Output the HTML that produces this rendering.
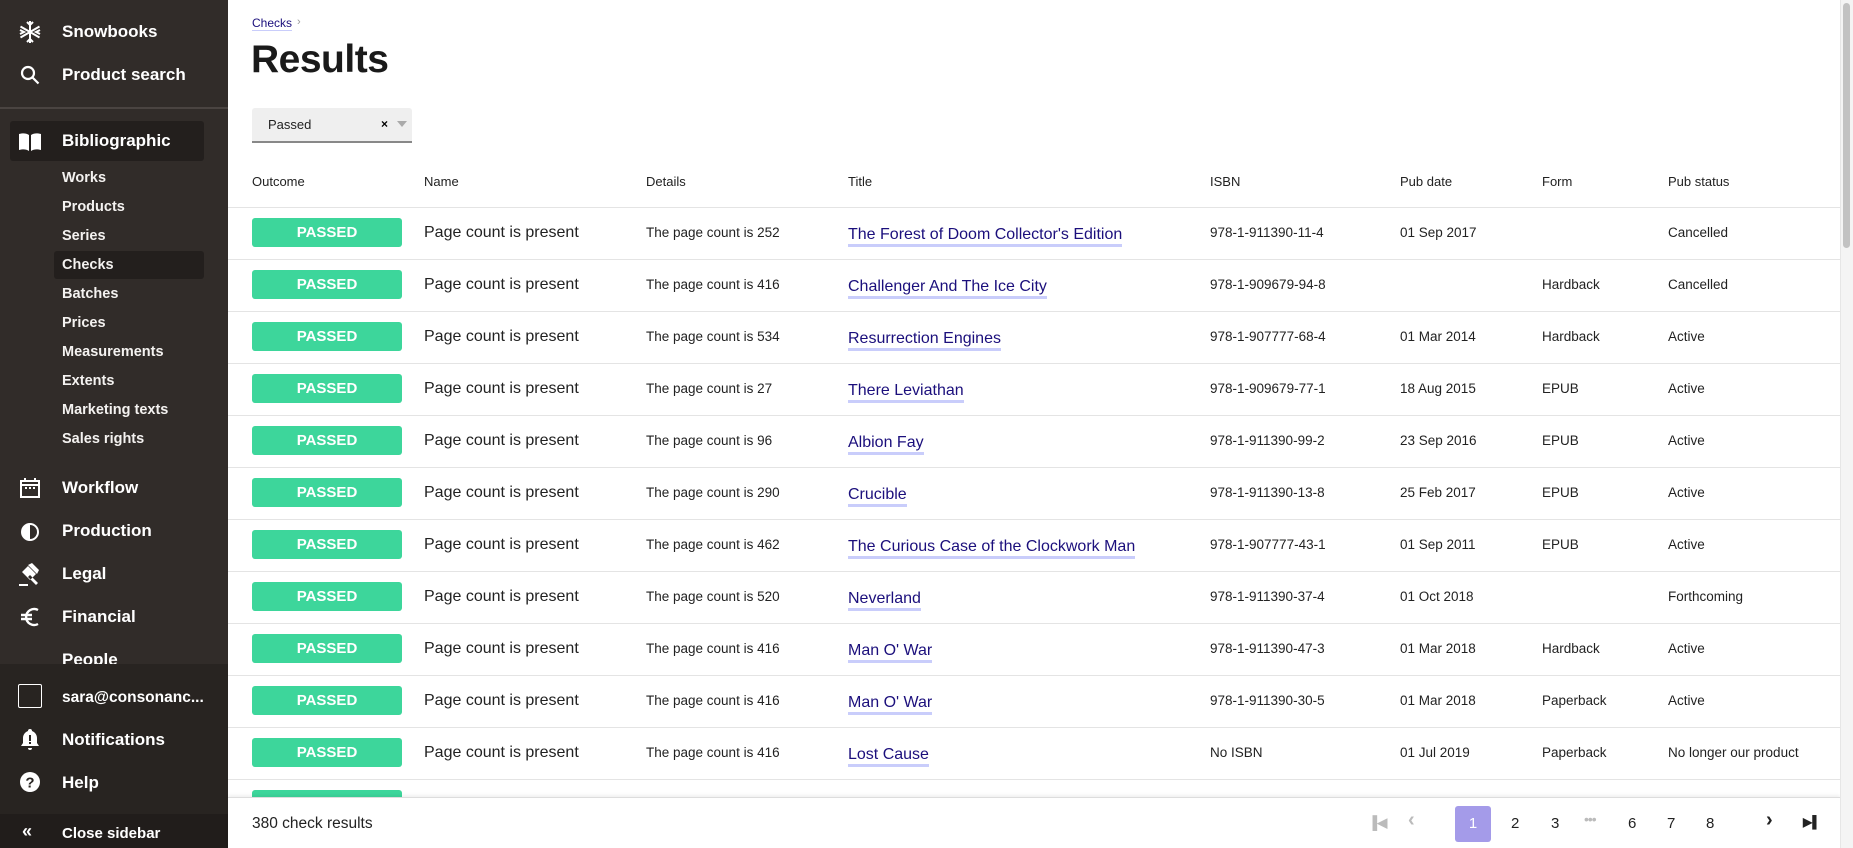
<!DOCTYPE html>
<html><head><meta charset="utf-8"><style>
*{box-sizing:border-box;margin:0;padding:0}
body{width:1853px;height:848px;overflow:hidden;font-family:"Liberation Sans",sans-serif;background:#fff;position:relative}
#sb{position:absolute;left:0;top:0;width:228px;height:848px;background:#312c29;color:#fff}
.it{position:absolute;left:62px;font-weight:bold;font-size:17px;line-height:20px}
.ic{position:absolute;left:18px;width:24px;height:24px}
.sub{position:absolute;left:62px;font-size:14.5px;line-height:18px;font-weight:bold;color:#f4f2f0}
#main{position:absolute;left:228px;top:0;width:1612px;height:848px}
.a{position:absolute}
.hd{position:absolute;top:174px;font-size:13px;color:#222}
.row{position:absolute;left:0;width:1612px;height:52px;border-top:1px solid #e4e4e4}
.badge{position:absolute;left:24px;top:10px;width:150px;height:29px;background:#3dd69b;border-radius:3px;color:#fff;font-weight:bold;font-size:15px;text-align:center;line-height:29px}
.c{position:absolute;top:17px;color:#222;white-space:nowrap}
.nm{left:196px;font-size:16px;top:16px}
.dt{left:418px;font-size:13.5px}
.tt{left:620px;font-size:16px;top:17px;color:#1b0f7c;border-bottom:3px solid #c9cdfb;line-height:19px}
.is{left:982px;font-size:13.5px}.pd{left:1172px;font-size:13.5px}.fm{left:1314px;font-size:13.5px}.ps{left:1440px;font-size:13.5px}
.pg{position:absolute;top:815px;font-size:15px;color:#222}
</style></head><body>
<div id="sb">
<svg class="ic" style="top:20px" viewBox="0 0 24 24" stroke="#fff" stroke-width="2" fill="none"><path d="M12 1v22M2.5 6.5l19 11M2.5 17.5l19-11M9 2l3 3 3-3M9 22l3-3 3 3M2 10l4 2-4 2M22 10l-4 2 4 2"/></svg>
<div class="it" style="top:22px">Snowbooks</div>
<svg class="ic" style="top:63px" viewBox="0 0 24 24" stroke="#fff" stroke-width="2.2" fill="none"><circle cx="10" cy="10" r="6"/><path d="M14.5 14.5l6 6"/></svg>
<div class="it" style="top:65px">Product search</div>
<div class="a" style="left:0;top:107px;width:228px;height:2px;background:#4a4441"></div>
<div class="a" style="left:10px;top:121px;width:194px;height:40px;background:#231f1d;border-radius:3px"></div>
<svg class="ic" style="top:130px" viewBox="0 0 24 24" fill="#fff"><path d="M1 4c4-1 7-1 10 1v16c-3-2-6-2-10-1zM13 5c3-2 6-2 10-1v16c-4-1-7-1-10 1z"/></svg>
<div class="it" style="top:131px">Bibliographic</div>
<div class="sub" style="top:169px">Works</div>
<div class="sub" style="top:198px">Products</div>
<div class="sub" style="top:227px">Series</div>
<div class="a" style="left:54px;top:251px;width:150px;height:28px;background:#231f1d;border-radius:3px"></div>
<div class="sub" style="top:256px">Checks</div>
<div class="sub" style="top:285px">Batches</div>
<div class="sub" style="top:314px">Prices</div>
<div class="sub" style="top:343px">Measurements</div>
<div class="sub" style="top:372px">Extents</div>
<div class="sub" style="top:401px">Marketing texts</div>
<div class="sub" style="top:430px">Sales rights</div>
<svg class="ic" style="top:476px" viewBox="0 0 24 24" fill="none" stroke="#fff" stroke-width="2"><rect x="3" y="5" width="18" height="16"/><path d="M3 9h18M7 2v4M17 2v4M7 12h2M11 12h2M15 12h2"/></svg>
<div class="it" style="top:478px">Workflow</div>
<svg class="ic" style="top:519px" viewBox="0 0 24 24"><circle cx="12" cy="13" r="8" fill="none" stroke="#fff" stroke-width="2"/><path d="M12 5v16a8 8 0 010-16z" fill="#fff"/></svg>
<div class="it" style="top:521px">Production</div>
<svg class="ic" style="top:562px" viewBox="0 0 24 24" fill="#fff"><path d="M10 3l4-2 7 7-2 4zM4 10l6-6 8 8-6 6zM10 15l8 8 2-2-8-8zM1 22h9v2H1z"/></svg>
<div class="it" style="top:564px">Legal</div>
<svg class="ic" style="top:605px" viewBox="0 0 24 24" fill="none" stroke="#fff" stroke-width="2.4"><path d="M20 5a8 8 0 100 14M3 10h11M3 14h11"/></svg>
<div class="it" style="top:607px">Financial</div>
<div class="it" style="top:650px">People</div>
<div class="a" style="left:0;top:664px;width:228px;height:150px;background:#282421"></div>
<div class="a" style="left:18px;top:684px;width:24px;height:24px;border:1.5px solid #fff;border-radius:2px"></div>
<div class="it" style="top:688px;font-size:15.5px">sara@consonanc...</div>
<svg class="ic" style="top:727px" viewBox="0 0 24 24" fill="#fff"><path d="M12 2a2 2 0 012 2c3 1 5 4 5 7v5l2 3H3l2-3v-5c0-3 2-6 5-7a2 2 0 012-2zM10 21h4a2 2 0 01-4 0z"/><rect x="11" y="8" width="2" height="6" fill="#282421"/><rect x="11" y="15" width="2" height="2" fill="#282421"/></svg>
<div class="it" style="top:730px">Notifications</div>
<svg class="ic" style="top:770px" viewBox="0 0 24 24"><circle cx="12" cy="12" r="10" fill="#fff"/><text x="12" y="17.5" text-anchor="middle" font-size="15" font-weight="bold" fill="#282421" font-family="Liberation Sans">?</text></svg>
<div class="it" style="top:773px">Help</div>
<div class="a" style="left:0;top:814px;width:228px;height:34px;background:#211d1b"></div>
<div class="it" style="top:821px;left:22px;font-size:18px">«</div>
<div class="it" style="top:824px;font-size:15px">Close sidebar</div>
</div>
<div id="main">
<div class="a" style="left:24px;top:16px;font-size:12px;color:#1b0f7c;border-bottom:1px solid #c9cdfb">Checks</div><div class="a" style="left:69px;top:16px;font-size:11px;color:#999">›</div>
<div class="a" style="left:23px;top:38px;font-size:39px;font-weight:bold;color:#1a1a1a;letter-spacing:-0.5px">Results</div>
<div class="a" style="left:24px;top:108px;width:160px;height:35px;background:#efefef;border-bottom:2px solid #888;border-radius:3px 3px 0 0"></div>
<div class="a" style="left:40px;top:117px;font-size:13px;color:#222">Passed</div>
<div class="a" style="left:153px;top:117px;font-size:12px;font-weight:bold">×</div>
<div class="a" style="left:169px;top:121px;border:5px solid transparent;border-top:6px solid #aaa"></div>
<div class="hd" style="left:24px">Outcome</div><div class="hd" style="left:196px">Name</div><div class="hd" style="left:418px">Details</div><div class="hd" style="left:620px">Title</div><div class="hd" style="left:982px">ISBN</div><div class="hd" style="left:1172px">Pub date</div><div class="hd" style="left:1314px">Form</div><div class="hd" style="left:1440px">Pub status</div>

<div class="row" style="top:207px"><div class="badge">PASSED</div><div class="c nm">Page count is present</div><div class="c dt">The page count is 252</div><div class="c tt">The Forest of Doom Collector's Edition</div><div class="c is">978-1-911390-11-4</div><div class="c pd">01 Sep 2017</div><div class="c fm"></div><div class="c ps">Cancelled</div></div>
<div class="row" style="top:259px"><div class="badge">PASSED</div><div class="c nm">Page count is present</div><div class="c dt">The page count is 416</div><div class="c tt">Challenger And The Ice City</div><div class="c is">978-1-909679-94-8</div><div class="c pd"></div><div class="c fm">Hardback</div><div class="c ps">Cancelled</div></div>
<div class="row" style="top:311px"><div class="badge">PASSED</div><div class="c nm">Page count is present</div><div class="c dt">The page count is 534</div><div class="c tt">Resurrection Engines</div><div class="c is">978-1-907777-68-4</div><div class="c pd">01 Mar 2014</div><div class="c fm">Hardback</div><div class="c ps">Active</div></div>
<div class="row" style="top:363px"><div class="badge">PASSED</div><div class="c nm">Page count is present</div><div class="c dt">The page count is 27</div><div class="c tt">There Leviathan</div><div class="c is">978-1-909679-77-1</div><div class="c pd">18 Aug 2015</div><div class="c fm">EPUB</div><div class="c ps">Active</div></div>
<div class="row" style="top:415px"><div class="badge">PASSED</div><div class="c nm">Page count is present</div><div class="c dt">The page count is 96</div><div class="c tt">Albion Fay</div><div class="c is">978-1-911390-99-2</div><div class="c pd">23 Sep 2016</div><div class="c fm">EPUB</div><div class="c ps">Active</div></div>
<div class="row" style="top:467px"><div class="badge">PASSED</div><div class="c nm">Page count is present</div><div class="c dt">The page count is 290</div><div class="c tt">Crucible</div><div class="c is">978-1-911390-13-8</div><div class="c pd">25 Feb 2017</div><div class="c fm">EPUB</div><div class="c ps">Active</div></div>
<div class="row" style="top:519px"><div class="badge">PASSED</div><div class="c nm">Page count is present</div><div class="c dt">The page count is 462</div><div class="c tt">The Curious Case of the Clockwork Man</div><div class="c is">978-1-907777-43-1</div><div class="c pd">01 Sep 2011</div><div class="c fm">EPUB</div><div class="c ps">Active</div></div>
<div class="row" style="top:571px"><div class="badge">PASSED</div><div class="c nm">Page count is present</div><div class="c dt">The page count is 520</div><div class="c tt">Neverland</div><div class="c is">978-1-911390-37-4</div><div class="c pd">01 Oct 2018</div><div class="c fm"></div><div class="c ps">Forthcoming</div></div>
<div class="row" style="top:623px"><div class="badge">PASSED</div><div class="c nm">Page count is present</div><div class="c dt">The page count is 416</div><div class="c tt">Man O' War</div><div class="c is">978-1-911390-47-3</div><div class="c pd">01 Mar 2018</div><div class="c fm">Hardback</div><div class="c ps">Active</div></div>
<div class="row" style="top:675px"><div class="badge">PASSED</div><div class="c nm">Page count is present</div><div class="c dt">The page count is 416</div><div class="c tt">Man O' War</div><div class="c is">978-1-911390-30-5</div><div class="c pd">01 Mar 2018</div><div class="c fm">Paperback</div><div class="c ps">Active</div></div>
<div class="row" style="top:727px"><div class="badge">PASSED</div><div class="c nm">Page count is present</div><div class="c dt">The page count is 416</div><div class="c tt">Lost Cause</div><div class="c is">No ISBN</div><div class="c pd">01 Jul 2019</div><div class="c fm">Paperback</div><div class="c ps">No longer our product</div></div>
<div class="row" style="top:779px"><div class="badge"></div></div>

<div class="a" style="left:0;top:797px;width:1612px;height:51px;background:#fff;border-top:1px solid #ddd;box-shadow:0 -2px 3px rgba(0,0,0,0.06)"></div>
<div class="a" style="left:24px;top:815px;font-size:15.5px;color:#222">380 check results</div>
<div class="a" style="left:1140px;top:815px;font-size:13px;color:#bbb;font-weight:bold">▐◀</div>
<div class="a" style="left:1180px;top:809px;font-size:20px;color:#bbb;font-weight:bold">‹</div>
<div class="a" style="left:1227px;top:806px;width:36px;height:36px;background:#a49be9;border-radius:3px;color:#fff;font-size:15px;text-align:center;line-height:36px">1</div>
<div class="pg" style="left:1283px">2</div>
<div class="pg" style="left:1323px">3</div>
<div class="a" style="left:1356px;top:811px;font-size:14px;color:#bbb;letter-spacing:-1px">•••</div>
<div class="pg" style="left:1400px">6</div>
<div class="pg" style="left:1439px">7</div>
<div class="pg" style="left:1478px">8</div>
<div class="a" style="left:1538px;top:809px;font-size:20px;color:#222;font-weight:bold">›</div>
<div class="a" style="left:1575px;top:815px;font-size:12px;color:#222;font-weight:bold">▶▌</div>
</div>
<div class="a" style="left:1840px;top:0;width:13px;height:848px;background:#f4f4f4;border-left:1px solid #e6e6e6"></div>
<div class="a" style="left:1843px;top:3px;width:7px;height:245px;background:#c2c2c2;border-radius:4px"></div>
</body></html>
